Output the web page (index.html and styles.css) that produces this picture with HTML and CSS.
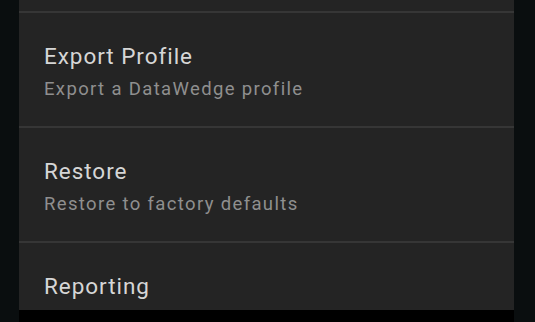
FILE: index.html
```html
<!DOCTYPE html>
<html>
<head>
<meta charset="utf-8">
<link rel="stylesheet" href="styles.css">
</head>
<body>
<div class="screen">
  <div class="panel">
    <div class="spacer"></div>
    <div class="row">
      <div class="title">Export Profile</div>
      <div class="summary">Export a DataWedge profile</div>
    </div>
    <div class="row">
      <div class="title">Restore</div>
      <div class="summary">Restore to factory defaults</div>
    </div>
    <div class="row">
      <div class="title">Reporting</div>
    </div>
  </div>
  <div class="navbar"></div>
</div>
</body>
</html>
```
FILE: styles.css
```css
html, body {
  margin: 0;
  padding: 0;
  background: #0a0e0f;
  width: 535px;
  height: 322px;
  overflow: hidden;
}
.screen {
  margin-left: 19px;
  width: 495px;
  height: 322px;
  display: flex;
  flex-direction: column;
  font-family: Roboto, "Noto Sans", sans-serif;
}
.panel {
  height: 310px;
  overflow: hidden;
  background: #242424;
}
.spacer {
  height: 11px;
}
.row {
  box-sizing: border-box;
  height: 115px;
  border-top: 2px solid #363636;
  padding: 28px 0 0 25px;
}
.title {
  font-size: 22.5px;
  line-height: 30px;
  letter-spacing: 0.95px;
  color: #d6d6d6;
}
.summary {
  margin-top: 4px;
  font-size: 18.5px;
  line-height: 28px;
  letter-spacing: 1.35px;
  color: #8f8f8f;
}
.navbar {
  height: 12px;
  background: #000;
}
```
